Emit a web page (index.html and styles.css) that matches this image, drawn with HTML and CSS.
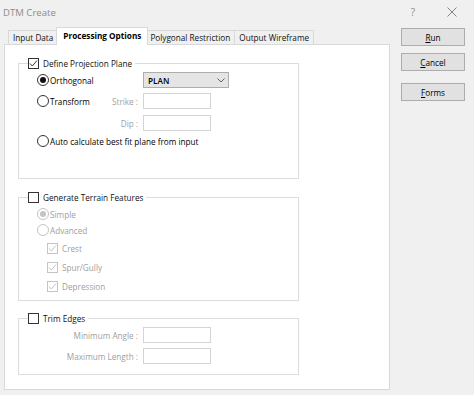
FILE: index.html
```html
<!DOCTYPE html>
<html lang="en">
<head>
  <meta charset="UTF-8">
  <title>DTM Create</title>
  <link rel="stylesheet" href="styles.css">
</head>
<body>
  <div class="titlebar">
    <span class="title">DTM Create</span>
    <span class="help">?</span>
    <svg class="close" width="10" height="10" viewBox="0 0 10 10">
      <path d="M0.5 0.5 L9.5 9.5 M9.5 0.5 L0.5 9.5" stroke="#777" stroke-width="0.9" fill="none"/>
    </svg>
  </div>

  <div class="dialog">
    <div class="tabs-area">
      <div class="tabbar">
        <div class="tab">Input Data</div>
        <div class="tab active">Processing Options</div>
        <div class="tab">Polygonal Restriction</div>
        <div class="tab">Output Wireframe</div>
      </div>

      <div class="panel">
        <fieldset class="group group-plane">
          <legend>
            <span class="check">
              <svg width="11" height="11" viewBox="0 0 11 11"><path d="M2 5.5 L4.3 8 L9 2.5" stroke="#333" stroke-width="1" fill="none"/></svg>
            </span>
            <span class="legend-text">Define Projection Plane</span>
          </legend>
          <div class="rows">
            <div class="row row-ortho">
              <div class="lead">
                <span class="radio selected"></span>
                <span class="opt">Orthogonal</span>
              </div>
              <div class="select">
                <span>PLAN</span>
                <svg width="8" height="5" viewBox="0 0 8 5"><path d="M0.5 0.5 L4 4 L7.5 0.5" stroke="#555" stroke-width="0.9" fill="none"/></svg>
              </div>
            </div>
            <div class="row row-transform">
              <div class="lead">
                <span class="radio"></span>
                <span class="opt">Transform</span>
                <span class="field-label">Strike :</span>
              </div>
              <div class="input"></div>
            </div>
            <div class="row row-dip">
              <div class="lead">
                <span class="field-label">Dip :</span>
              </div>
              <div class="input"></div>
            </div>
            <div class="row row-auto">
              <div class="lead wide">
                <span class="radio"></span>
                <span class="opt">Auto calculate best fit plane from input</span>
              </div>
            </div>
          </div>
        </fieldset>

        <fieldset class="group group-terrain">
          <legend>
            <span class="check"></span>
            <span class="legend-text">Generate Terrain Features</span>
          </legend>
          <div class="rows disabled">
            <div class="row row-simple">
              <span class="radio selected"></span>
              <span class="opt">Simple</span>
            </div>
            <div class="row row-advanced">
              <span class="radio"></span>
              <span class="opt">Advanced</span>
            </div>
            <div class="row sub row-crest">
              <span class="check">
                <svg width="11" height="11" viewBox="0 0 11 11"><path d="M2 5.5 L4.3 8 L9 2.5" stroke="#c4c4c4" stroke-width="1" fill="none"/></svg>
              </span>
              <span class="sub-text">Crest</span>
            </div>
            <div class="row sub row-spur">
              <span class="check">
                <svg width="11" height="11" viewBox="0 0 11 11"><path d="M2 5.5 L4.3 8 L9 2.5" stroke="#c4c4c4" stroke-width="1" fill="none"/></svg>
              </span>
              <span class="sub-text">Spur/Gully</span>
            </div>
            <div class="row sub row-depression">
              <span class="check">
                <svg width="11" height="11" viewBox="0 0 11 11"><path d="M2 5.5 L4.3 8 L9 2.5" stroke="#c4c4c4" stroke-width="1" fill="none"/></svg>
              </span>
              <span class="sub-text">Depression</span>
            </div>
          </div>
        </fieldset>

        <fieldset class="group group-trim">
          <legend>
            <span class="check"></span>
            <span class="legend-text">Trim Edges</span>
          </legend>
          <div class="rows">
            <div class="row row-minangle">
              <div class="lead">
                <span class="field-label">Minimum Angle :</span>
              </div>
              <div class="input"></div>
            </div>
            <div class="row row-maxlength">
              <div class="lead">
                <span class="field-label">Maximum Length :</span>
              </div>
              <div class="input"></div>
            </div>
          </div>
        </fieldset>
      </div>
    </div>

    <div class="buttons">
      <button class="btn btn-run"><u>R</u>un</button>
      <button class="btn btn-cancel"><u>C</u>ancel</button>
      <button class="btn btn-forms"><u>F</u>orms</button>
    </div>
  </div>
</body>
</html>
```

FILE: styles.css
```css
body {
  margin: 0;
  padding: 0;
  width: 474px;
  height: 395px;
  overflow: hidden;
  background-color: #f0f0f0;
  color: #111;
  font-family: 'Open Sans', 'Noto Sans', sans-serif;
  font-size: 8.2px;
  font-weight: 500;
}

.titlebar {
  height: 24px;
  display: flex;
  align-items: center;
  padding-left: 3px;
}

.title {
  font-size: 9.6px;
  font-weight: 400;
  color: #8c8c8c;
  flex: 1;
}

.help {
  font-size: 10px;
  font-weight: 400;
  color: #8c8c8c;
  margin-right: 32px;
}

.close {
  margin-right: 17px;
}

.dialog {
  display: flex;
  padding-left: 4px;
}

.tabs-area {
  width: 386px;
}

.tabbar {
  height: 20px;
  display: flex;
  align-items: flex-end;
  padding-left: 4px;
}

.tab {
  height: 14px;
  line-height: 13px;
  padding: 0 4px;
  border: 1px solid #d9d9d9;
  border-bottom: none;
  border-left: none;
  box-sizing: border-box;
  background-color: #f0f0f0;
  white-space: nowrap;
}

.tab:first-child {
  border-left: 1px solid #d9d9d9;
}

.tab.active {
  position: relative;
  z-index: 1;
  height: 18px;
  line-height: 16px;
  margin: 0 -2px -1px -2px;
  padding: 0 6px;
  border-left: 1px solid #d9d9d9;
  background-color: #fff;
  font-weight: bold;
  color: #000;
}

.panel {
  height: 346px;
  box-sizing: border-box;
  background-color: #fff;
  border: 1px solid #d9d9d9;
  padding: 12px 0 0 13px;
}

.group {
  width: 281px;
  box-sizing: border-box;
  margin: 0;
  padding: 0;
  min-width: 0;
  border: 1px solid #dcdcdc;
}

.group legend {
  margin-left: 9px;
  padding: 0 3px 0 0;
  height: 12px;
  display: flex;
  align-items: center;
}

.legend-text {
  margin-left: 4px;
}

.group-plane {
  height: 122px;
}

.group-terrain {
  height: 110px;
  margin-top: 12px;
}

.group-trim {
  height: 63px;
  margin-top: 11px;
}

.rows {
  padding-left: 18px;
}

.row {
  display: flex;
  align-items: center;
  height: 16px;
}

.lead {
  width: 106px;
  flex: none;
  display: flex;
  align-items: center;
  height: 16px;
}

.lead.wide {
  width: 220px;
}

.field-label {
  margin-left: auto;
  padding-right: 5px;
  color: #a0a0a0;
}

.opt {
  margin-left: 1px;
  color: #000;
}

.check {
  width: 11px;
  height: 11px;
  box-sizing: border-box;
  border: 1px solid #333;
  flex: none;
  display: flex;
}

.check svg {
  margin: -1px;
}

.radio {
  width: 12px;
  height: 12px;
  box-sizing: border-box;
  border: 1px solid #333;
  border-radius: 50%;
  flex: none;
  display: flex;
  align-items: center;
  justify-content: center;
}

.radio.selected::after {
  content: '';
  width: 6px;
  height: 6px;
  border-radius: 50%;
  background-color: #111;
}

.select {
  width: 86px;
  height: 16px;
  box-sizing: border-box;
  background-color: #e5e5e5;
  border: 1px solid #adadad;
  display: flex;
  align-items: center;
  justify-content: space-between;
  padding: 0 3px 0 4px;
  font-weight: 600;
  color: #000;
}

.input {
  width: 68px;
  height: 16px;
  box-sizing: border-box;
  border: 1px solid #d4d4d4;
  background-color: #fff;
}

.row-ortho { margin-top: 3px; }
.row-transform { margin-top: 5px; }
.row-dip { margin-top: 6px; }
.row-auto { margin-top: 2px; }

.disabled .opt,
.disabled .sub-text {
  color: #a0a0a0;
}

.disabled .radio,
.disabled .check {
  border-color: #c4c4c4;
}

.disabled .radio.selected::after {
  background-color: #c4c4c4;
}

.row.sub {
  padding-left: 10px;
}

.sub-text {
  margin-left: 4px;
}

.row-simple { margin-top: 3px; }
.row-crest { margin-top: 2px; }
.row-spur { margin-top: 3px; }
.row-depression { margin-top: 3px; }

.row-minangle { margin-top: 3px; }
.row-maxlength { margin-top: 5px; }

.buttons {
  display: flex;
  flex-direction: column;
  margin-left: 11px;
  padding-top: 4px;
}

.btn {
  width: 64px;
  height: 18px;
  box-sizing: border-box;
  margin: 0;
  padding: 0;
  background-color: #e1e1e1;
  border: 1px solid #adadad;
  font-family: 'Open Sans', 'Noto Sans', sans-serif;
  font-size: 8.2px;
  font-weight: 500;
  color: #000;
}

.btn-cancel { margin-top: 7px; }
.btn-forms { margin-top: 12px; }
```
